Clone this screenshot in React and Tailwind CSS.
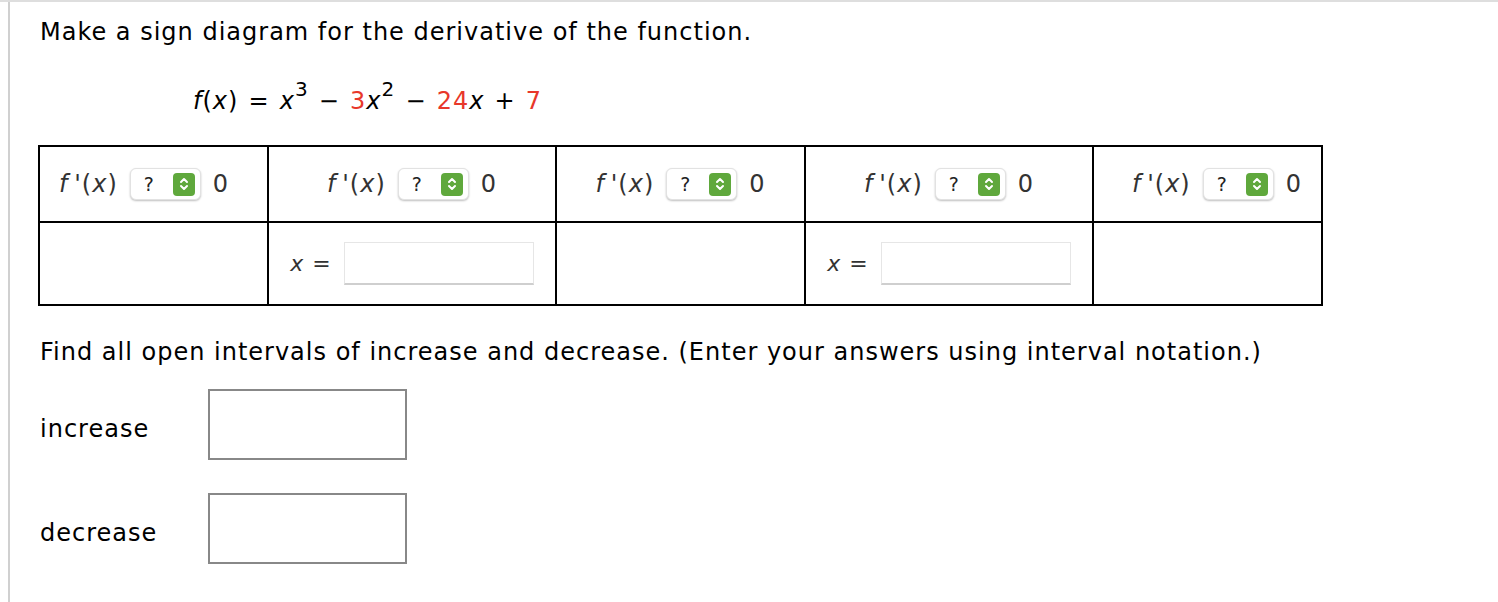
import React from 'react';

const font = { fontFamily: '"DejaVu Sans", Verdana, sans-serif' };

function SignSelect() {
  return (
    <div className="inline-flex items-center h-[32px] w-[71px] rounded-[6px] border border-[#e2e2e2] bg-white shadow-[0_1px_2px_rgba(0,0,0,0.25)] pl-[13px] pr-[5px] justify-between tracking-normal">
      <span className="text-[19px] text-[#222]">?</span>
      <span className="flex items-center justify-center w-[22px] h-[23px] rounded-[4px] bg-[#5fa83c]">
        <svg width="10" height="14" viewBox="0 0 10 14" fill="none" stroke="white" strokeWidth="2" strokeLinecap="round" strokeLinejoin="round">
          <path d="M2 5 L5 2 L8 5" />
          <path d="M2 9 L5 12 L8 9" />
        </svg>
      </span>
    </div>
  );
}

function Deriv() {
  return (
    <span className="inline-flex items-center gap-[12px] text-[#333]">
      <span className="text-[24px] tracking-[1px]">
        <i>f</i>&#8201;'(<i>x</i>)
      </span>
      <SignSelect />
      <span className="text-[24px]">0</span>
    </span>
  );
}

function XInput() {
  return (
    <span className="inline-flex items-center gap-[12px] text-[#333]">
      <span className="text-[22px] tracking-[1px]">
        <i>x</i> =
      </span>
      <span className="block w-[190px] h-[43px] border border-[#e6e6e6] border-b-2 border-b-[#cfcfcf] bg-white" />
    </span>
  );
}

export default function App() {
  return (
    <div className="min-h-screen bg-white border-t-2 border-[#dedede]" style={font}>
      <div className="ml-[8px] border-l-2 border-[#d0d0d0] pl-[30px] pt-[16px] pb-[38px] text-black tracking-[1px]">
        <p className="text-[24px] leading-[29px]">Make a sign diagram for the derivative of the function.</p>

        <p className="text-[24px] leading-[29px] mt-[40px] pl-[153px] [word-spacing:1.5px]">
          <i>f</i>(<i>x</i>) = <i>x</i>
          <sup className="text-[20px] -top-[13px]">3</sup> &minus; <span className="text-[#e8372a]">3</span>
          <i>x</i>
          <sup className="text-[20px] -top-[13px]">2</sup> &minus; <span className="text-[#e8372a]">24</span>
          <i>x</i> + <span className="text-[#e8372a]">7</span>
        </p>

        <table className="mt-[29px] -ml-[2px] border-collapse border-2 border-black">
          <tbody>
            <tr className="h-[76px]">
              <td className="w-[229px] border-2 border-black pl-[19px] text-left"><Deriv /></td>
              <td className="w-[288px] border-2 border-black text-center"><Deriv /></td>
              <td className="w-[249px] border-2 border-black text-center"><Deriv /></td>
              <td className="w-[288px] border-2 border-black text-center"><Deriv /></td>
              <td className="w-[229px] border-2 border-black pr-[19px] text-right"><Deriv /></td>
            </tr>
            <tr className="h-[83px]">
              <td className="border-2 border-black"></td>
              <td className="border-2 border-black text-center"><XInput /></td>
              <td className="border-2 border-black"></td>
              <td className="border-2 border-black text-center"><XInput /></td>
              <td className="border-2 border-black"></td>
            </tr>
          </tbody>
        </table>

        <p className="text-[24px] leading-[29px] mt-[32px]">
          Find all open intervals of increase and decrease. (Enter your answers using interval notation.)
        </p>

        <div className="mt-[22px] flex items-center">
          <span className="w-[168px] text-[24px] pt-[8px]">increase</span>
          <span className="block w-[199px] h-[71px] border-2 border-[#888]" />
        </div>
        <div className="mt-[33px] flex items-center">
          <span className="w-[168px] text-[24px] pt-[8px]">decrease</span>
          <span className="block w-[199px] h-[71px] border-2 border-[#888]" />
        </div>
      </div>
    </div>
  );
}
